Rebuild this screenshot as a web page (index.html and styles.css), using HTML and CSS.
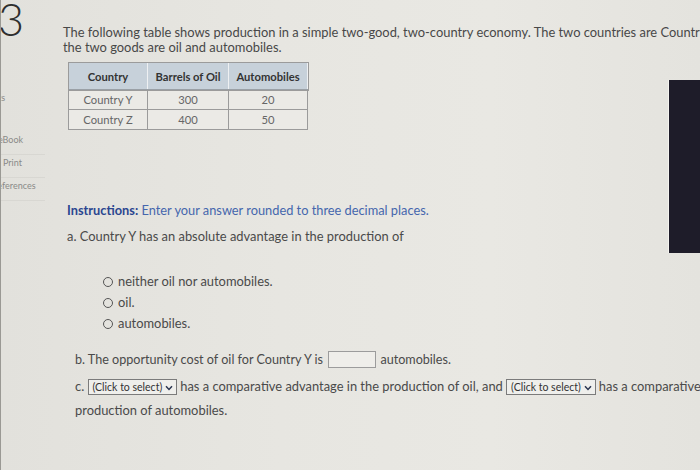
FILE: index.html
```html
<!DOCTYPE html>
<html>
<head>
<meta charset="utf-8">
<link rel="stylesheet" href="styles.css">
</head>
<body>
<div class="page">
  <aside class="side">
    <div class="qnum">3</div>
    <ul class="nav">
      <li class="nav-item first"><span class="cut">Hints</span></li>
      <li class="nav-item"><span class="cut ebook">eBook</span></li>
      <li class="nav-item"><span class="print">Print</span></li>
      <li class="nav-item"><span class="cut refs">References</span></li>
    </ul>
  </aside>
  <main class="main">
    <p class="intro">The following table shows production in a simple two-good, two-country economy. The two countries are Country Y and Country Z, and<br>the two goods are oil and automobiles.</p>
    <table class="data">
      <thead>
        <tr><th class="c1">Country</th><th class="c2">Barrels of Oil</th><th class="c3">Automobiles</th></tr>
      </thead>
      <tbody>
        <tr><td>Country Y</td><td>300</td><td>20</td></tr>
        <tr><td>Country Z</td><td>400</td><td>50</td></tr>
      </tbody>
    </table>
    <p class="instr"><b>Instructions:</b> Enter your answer rounded to three decimal places.</p>
    <p class="qa">a. Country Y has an absolute advantage in the production of</p>
    <ul class="options">
      <li class="opt"><span class="radio"></span>neither oil nor automobiles.</li>
      <li class="opt"><span class="radio"></span>oil.</li>
      <li class="opt"><span class="radio"></span>automobiles.</li>
    </ul>
    <p class="qb">b. The opportunity cost of oil for Country Y is <span class="input"></span> automobiles.</p>
    <p class="qc">c. <span class="select">(Click to select) <svg class="chev" width="8" height="6" viewBox="0 0 8 6"><path d="M1 1.2 L4 4.4 L7 1.2" fill="none" stroke="#2a3550" stroke-width="1.5"/></svg></span> has a comparative advantage in the production of oil, and <span class="select">(Click to select) <svg class="chev" width="8" height="6" viewBox="0 0 8 6"><path d="M1 1.2 L4 4.4 L7 1.2" fill="none" stroke="#2a3550" stroke-width="1.5"/></svg></span> has a comparative advantage in the<br>production of automobiles.</p>
  </main>
  <div class="dark-panel"></div>
</div>
</body>
</html>
```

FILE: styles.css
```css
html, body {
  margin: 0;
  padding: 0;
}
body {
  width: 700px;
  height: 470px;
  overflow: hidden;
  background: #e5e4df;
  font-family: Lato, "Open Sans", sans-serif;
  color: #4a4a4a;
}
.page {
  position: relative;
  width: 700px;
  height: 470px;
  overflow: hidden;
  display: flex;
  background: linear-gradient(90deg, #e2e1dc 0%, #e7e6e1 40%, #e9e8e3 70%, #e4e3de 100%);
  border-left: 1px solid #9a9994;
  box-sizing: border-box;
}
.side {
  width: 62px;
  flex: none;
  overflow: hidden;
}
.qnum {
  font-size: 45px;
  font-weight: 300;
  line-height: 38px;
  color: #2e2e2e;
  margin-left: -3px;
  height: 38px;
}
.nav {
  list-style: none;
  margin: 52px 0 0 0;
  padding: 0;
  width: 44px;
  font-size: 9px;
  color: #8a8a88;
}
.nav-item {
  height: 23px;
  line-height: 16px;
  border-bottom: 1px solid #d8d7d2;
  box-sizing: border-box;
  white-space: nowrap;
}
.nav-item.first {
  height: 42px;
  border-bottom: none;
}
.cut {
  display: inline-block;
}
.nav-item.first .cut { margin-left: -17px; }
.ebook { margin-left: -3px; }
.print { margin-left: 2px; }
.refs { margin-left: -9px; }

.main {
  flex: 1;
  padding-top: 25px;
  white-space: nowrap;
}
.main p { margin: 0; }
.intro {
  font-size: 12.9px;
  line-height: 15px;
  color: #484848;
}
.data {
  margin: 7px 0 0 5px;
  border-collapse: collapse;
  font-size: 11.2px;
}
.data th {
  background: #c7d1da;
  color: #333;
  font-weight: 700;
  height: 26px;
  padding: 0;
  border: 1px solid #eef0f2;
  border-bottom: 1px solid #9aa0a6;
  text-align: center;
}
.data thead tr { outline: 1px solid #9b9b9b; }
.c1 { width: 78px; }
.c2 { width: 80px; }
.c3 { width: 78px; }
.data td {
  height: 19px;
  padding: 0;
  border: 1px solid #9b9b9b;
  color: #666;
  text-align: center;
  background: #ebeae6;
}
.instr {
  margin-top: 72px !important;
  margin-left: 4px !important;
  font-size: 12.8px;
  line-height: 16px;
  color: #4566ad;
}
.instr b { color: #2b4690; }
.qa {
  margin-top: 10px !important;
  margin-left: 4px !important;
  font-size: 12.9px;
  line-height: 16px;
}
.options {
  list-style: none;
  margin: 27px 0 0 40px;
  padding: 0;
  font-size: 12.9px;
}
.opt {
  height: 21px;
  line-height: 21px;
  display: flex;
  align-items: center;
}
.radio {
  width: 8px;
  height: 8px;
  border: 1.3px solid #555;
  border-radius: 50%;
  margin-right: 5px;
  flex: none;
}
.qb {
  margin-top: 17px !important;
  margin-left: 12px !important;
  font-size: 12.6px;
  line-height: 18px;
}
.input {
  display: inline-block;
  width: 46px;
  height: 15px;
  border: 1px solid #9c9c9c;
  background: #efeeea;
  vertical-align: -4px;
  margin: 0 1px 0 2px;
}
.qc {
  margin-top: 5px !important;
  margin-left: 12px !important;
  font-size: 12.9px;
  line-height: 24px;
}
.select {
  display: inline-block;
  border: 1px solid #7b7b7b;
  background: #efefec;
  font-size: 10.5px;
  line-height: 14px;
  height: 14px;
  padding: 0 3px 0 4px;
  color: #333;
  vertical-align: 0px;
}
.chev { vertical-align: 0px; }
.dark-panel {
  position: absolute;
  left: 667px;
  top: 80px;
  width: 40px;
  height: 173px;
  background: #1e1c29;
  border-left: 1px solid #f4f3ef;
}
```
